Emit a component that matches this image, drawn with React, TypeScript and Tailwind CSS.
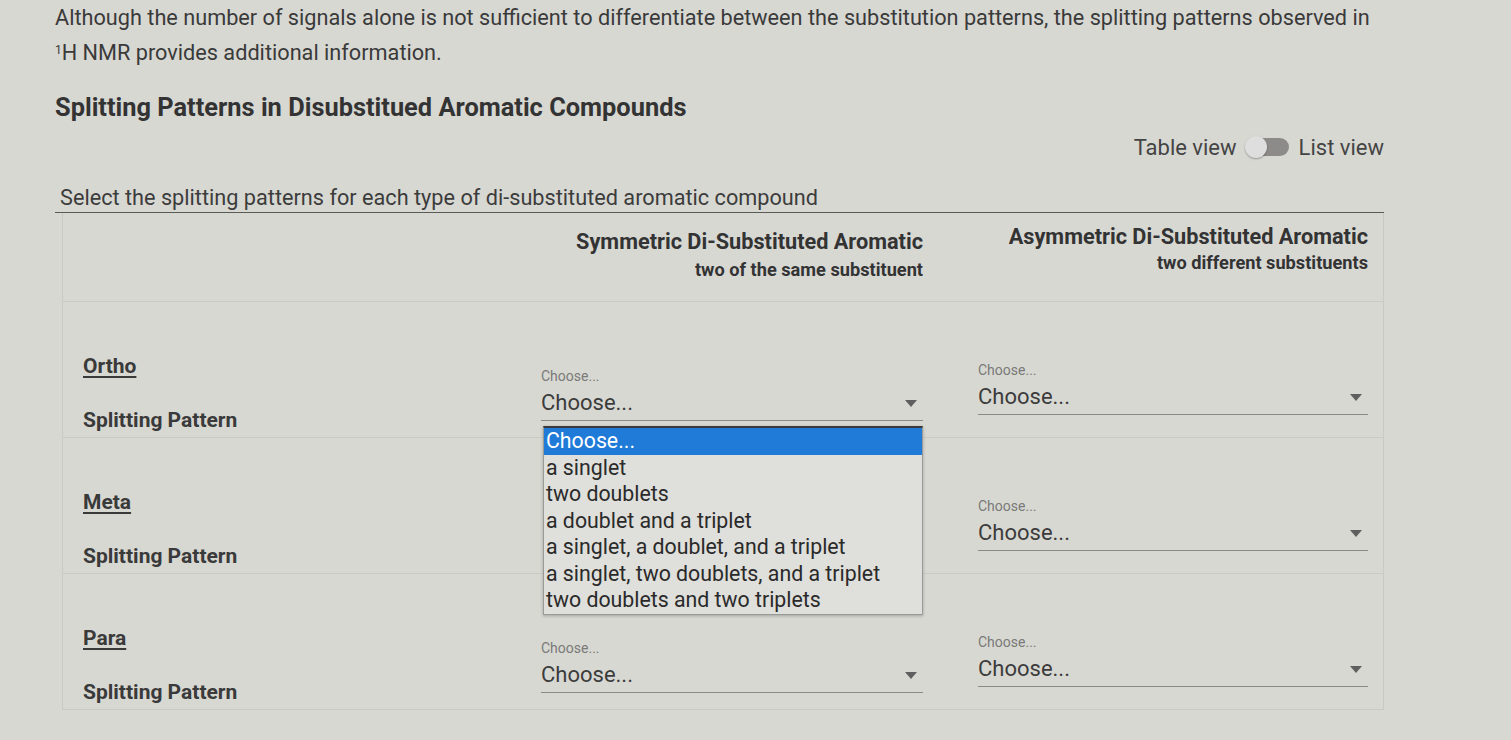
import React from "react";

const OPTIONS = [
  "Choose...",
  "a singlet",
  "two doublets",
  "a doublet and a triplet",
  "a singlet, a doublet, and a triplet",
  "a singlet, two doublets, and a triplet",
  "two doublets and two triplets",
];

const ROWS = ["Ortho", "Meta", "Para"];

function Arrow() {
  return (
    <svg width="12" height="7" viewBox="0 0 12 7" className="shrink-0">
      <path d="M0 0 L12 0 L6 7 Z" fill="#5f5f5f" />
    </svg>
  );
}

// material-ish select: tiny floating label, value, caret, underline
function FakeSelect({ width, open, hidden }: { width: string; open?: boolean; hidden?: boolean }) {
  return (
    <div className={`relative ${width} ${hidden ? "invisible" : ""}`}>
      <div className="text-[14px] leading-[18px] text-[#7a7a78]">Choose...</div>
      <div className="mt-[4px] flex items-center justify-between pb-[3px] pr-[6px]">
        <span className="text-[22px] leading-[28px] text-[#3c3c3c]">Choose...</span>
        <Arrow />
      </div>
      <div className="h-px bg-[#8a8a88]" />
      {open && (
        <div className="absolute left-[2px] right-0 top-[59px] z-10 border border-[#9a9a98] border-t-2 border-t-[#3a3a3a] bg-[#dfdfdb] shadow-[0_1px_3px_rgba(0,0,0,0.25)]">
          {OPTIONS.map((o, i) => (
            <div
              key={o}
              className={`px-[2px] text-[21.3px] leading-[26.5px] ${i === 0 ? "bg-[#1f7ad8] text-white" : "text-[#2a2a2a]"}`}
            >
              {o}
            </div>
          ))}
        </div>
      )}
    </div>
  );
}

export default function App() {
  return (
    <div className="min-h-screen bg-[#d8d8d3] pl-[55px] pr-[127px] font-['Roboto',sans-serif] text-[#3a3a3a]">
      <p className="whitespace-nowrap text-[21.7px] leading-[35px]">
        Although the number of signals alone is not sufficient to differentiate between the substitution patterns, the splitting patterns observed in
        <br />
        <sup className="text-[12px]">1</sup>H NMR provides additional information.
      </p>

      <h2 className="mt-[22px] text-[25.4px] font-bold leading-[30px] text-[#333]">
        Splitting Patterns in Disubstitued Aromatic Compounds
      </h2>

      <div className="mt-[10px] flex h-[30px] items-center justify-end gap-[8px] text-[22px] text-[#444]">
        <span>Table view</span>
        <span className="relative flex h-[20px] w-[46px] items-center">
          <span className="absolute right-[2px] h-[18px] w-[34px] rounded-r-full bg-[#8d8b89]" />
          <span className="absolute left-0 h-[22px] w-[22px] rounded-full bg-[#dedede] shadow-[0_1px_2px_rgba(0,0,0,0.3)]" />
        </span>
        <span>List view</span>
      </div>

      <div className="mt-[22px] border-b border-[#5a5a58] pl-[5px] text-[21.7px] leading-[28px] text-[#3c3c3c]">
        Select the splitting patterns for each type of di-substituted aromatic compound
      </div>

      <div className="ml-[7px] border-x border-b border-[#cacac5]">
        <div className="grid h-[88px] grid-cols-[478px_437px_1fr]">
          <div />
          <div className="pt-[16px]">
            <div className="w-[382px] text-right font-bold text-[#333]">
              <div className="text-[21.7px] leading-[26px]">Symmetric Di-Substituted Aromatic</div>
              <div className="mt-[4px] text-[18.2px] leading-[22px]">two of the same substituent</div>
            </div>
          </div>
          <div className="pt-[11px]">
            <div className="w-[390px] text-right font-bold text-[#333]">
              <div className="text-[21.7px] leading-[26px]">Asymmetric Di-Substituted Aromatic</div>
              <div className="mt-[2px] text-[18.2px] leading-[22px]">two different substituents</div>
            </div>
          </div>
        </div>

        {ROWS.map((r, i) => (
          <div key={r} className="grid h-[136px] grid-cols-[478px_437px_1fr] border-t border-[#cacac5]">
            <div className="pl-[20px] pt-[51px] font-bold text-[#3a3a3a]">
              <div className="text-[21px] leading-[26px] underline underline-offset-[3px]">{r}</div>
              <div className="mt-[28px] text-[21px] leading-[26px]">Splitting Pattern</div>
            </div>
            <div className="pt-[65px]">
              <FakeSelect width="w-[382px]" open={i === 0} hidden={i === 1} />
            </div>
            <div className="pt-[59px]">
              <FakeSelect width="w-[390px]" />
            </div>
          </div>
        ))}
      </div>
    </div>
  );
}
